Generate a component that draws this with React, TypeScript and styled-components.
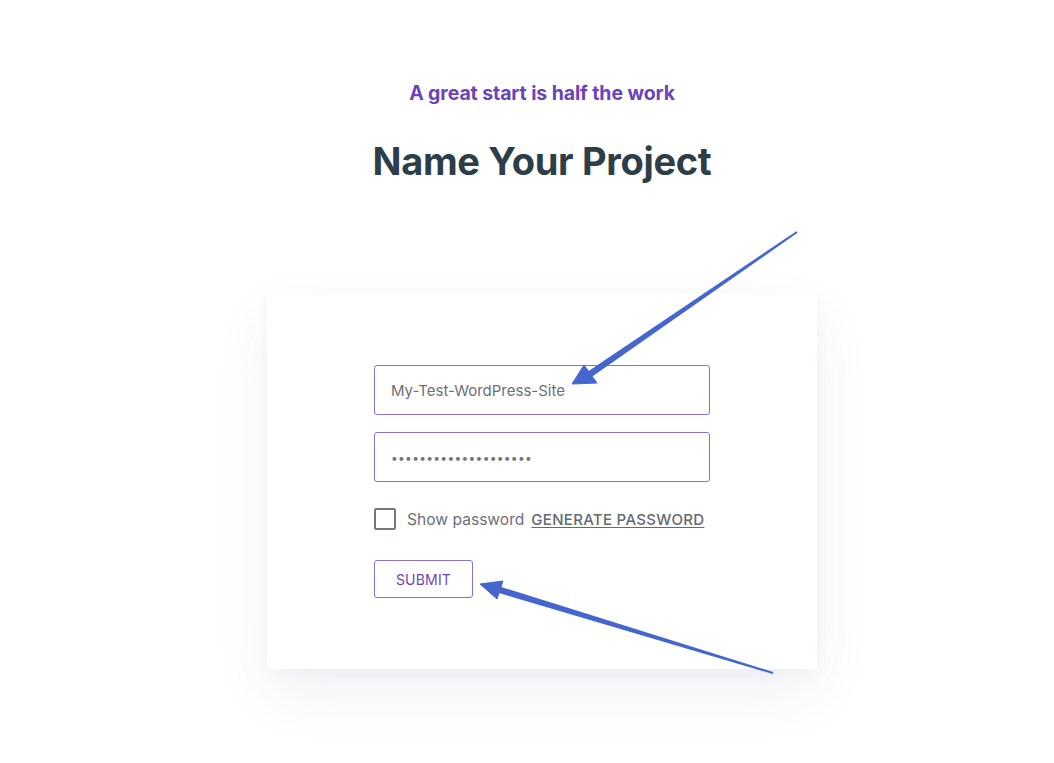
import React from "react";
import styled, { createGlobalStyle } from "styled-components";

const Global = createGlobalStyle`
  html, body { margin: 0; padding: 0; background: #ffffff; }
  body { font-family: Inter, "Noto Sans", sans-serif; -webkit-font-smoothing: antialiased; }
  * { box-sizing: border-box; }
`;

const Page = styled.main`
  position: relative;
  width: 1054px;
  height: 763px;
  display: flex;
  flex-direction: column;
  align-items: center;
  padding: 81px 0 0 30px;
  overflow: hidden;
`;

const Eyebrow = styled.p`
  margin: 0;
  font-size: 19.5px;
  line-height: 24px;
  font-weight: 700;
  color: #6b43ba;
  letter-spacing: -0.1px;
`;

const Title = styled.h1`
  margin: 32px 0 0;
  font-size: 38px;
  line-height: 48px;
  font-weight: 700;
  color: #2d3e48;
  letter-spacing: -0.3px;
`;

const Card = styled.form`
  margin-top: 108px;
  width: 550px;
  padding: 72px 107px 71px;
  background: #ffffff;
  border-radius: 2px;
  box-shadow: 0 24px 60px rgba(40, 50, 110, 0.07), 0 4px 14px rgba(40, 50, 110, 0.03);
  display: flex;
  flex-direction: column;
`;

const Field = styled.input`
  width: 336px;
  height: 50px;
  border: 1px solid #8c72c4;
  border-radius: 3px;
  padding: 0 16px;
  font-family: Inter, "Noto Sans", sans-serif;
  font-size: 15px;
  color: #6c7079;
  background: #fff;
  outline: none;
  & + & { margin-top: 17px; }
  &[type="password"] { font-size: 12px; letter-spacing: 0.3px; color: #70747a; }
`;

const CheckRow = styled.label`
  display: flex;
  align-items: center;
  margin-top: 26px;
  height: 22px;
  font-size: 15.6px;
  color: #6c7079;
`;

const Box = styled.span`
  width: 22px;
  height: 22px;
  border: 2px solid #75797e;
  border-radius: 2px;
  margin-right: 11px;
  flex: none;
`;

const GenLink = styled.a`
  margin-left: 7px;
  font-size: 15px;
  font-weight: 500;
  color: #626a72;
  text-decoration: underline;
  text-underline-offset: 2px;
  letter-spacing: 0.3px;
`;

const Submit = styled.button`
  margin-top: 30px;
  align-self: flex-start;
  width: 99px;
  height: 38px;
  border: 1px solid #8c72c4;
  border-radius: 3px;
  background: #fff;
  color: #6b46b6;
  font-family: Inter, "Noto Sans", sans-serif;
  font-size: 14px;
  letter-spacing: 0.2px;
  padding: 0;
`;

const Overlay = styled.svg`
  position: absolute;
  left: 0;
  top: 0;
  width: 1054px;
  height: 763px;
  pointer-events: none;
`;

function taper(x1: number, y1: number, x2: number, y2: number, w1: number, w2: number) {
  const dx = x2 - x1, dy = y2 - y1;
  const len = Math.hypot(dx, dy);
  const nx = -dy / len, ny = dx / len;
  return [
    [x1 + nx * w1 / 2, y1 + ny * w1 / 2],
    [x2 + nx * w2 / 2, y2 + ny * w2 / 2],
    [x2 - nx * w2 / 2, y2 - ny * w2 / 2],
    [x1 - nx * w1 / 2, y1 - ny * w1 / 2],
  ].map((p) => p.join(",")).join(" ");
}

function Arrow({ tail, tip, head }: { tail: [number, number]; tip: [number, number]; head: [[number, number], [number, number]] }) {
  const [tx, ty] = tip;
  const base: [number, number] = [(head[0][0] + head[1][0]) / 2, (head[0][1] + head[1][1]) / 2];
  return (
    <g fill="#4566cf">
      <polygon points={taper(tail[0], tail[1], base[0] + (tx - base[0]) * 0.1, base[1] + (ty - base[1]) * 0.1, 2, 6.5)} />
      <polygon points={`${tx},${ty} ${head[0][0]},${head[0][1]} ${head[1][0]},${head[1][1]}`} strokeLinejoin="round" stroke="#4566cf" strokeWidth={1} />
    </g>
  );
}

export default function App() {
  return (
    <>
      <Global />
      <Page>
        <Eyebrow>A great start is half the work</Eyebrow>
        <Title>Name Your Project</Title>
        <Card onSubmit={(e) => e.preventDefault()}>
          <Field type="text" defaultValue="My-Test-WordPress-Site" />
          <Field type="password" defaultValue="12345678901234567890" />
          <CheckRow>
            <Box />
            Show password
            <GenLink>GENERATE PASSWORD</GenLink>
          </CheckRow>
          <Submit type="submit">SUBMIT</Submit>
        </Card>
        <Overlay viewBox="0 0 1054 763">
          <Arrow tail={[797, 232]} tip={[572, 384]} head={[[584, 365], [597, 383]]} />
          <Arrow tail={[773, 673]} tip={[480, 584]} head={[[503, 581], [497, 599]]} />
        </Overlay>
      </Page>
    </>
  );
}
